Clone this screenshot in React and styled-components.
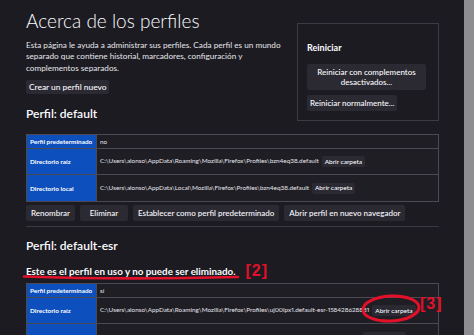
import styled, { createGlobalStyle } from "styled-components";

const GlobalStyle = createGlobalStyle`
  html, body {
    margin: 0;
    padding: 0;
    background: #1c1b22;
  }
  body {
    font-family: Lato, "Open Sans", sans-serif;
    color: #fbfbfe;
  }
  * { box-sizing: border-box; }
`;

const Screen = styled.div`
  display: flex;
  width: 474px;
  height: 335px;
  overflow: hidden;
  position: relative;
`;

const Main = styled.main`
  flex: 1;
  padding-left: 26px;
`;

const Scrollbar = styled.div`
  width: 10px;
  flex-shrink: 0;
  background: #8e8d92;
`;

const Column = styled.div`
  width: 413px;
`;

const Top = styled.div`
  display: flex;
  justify-content: space-between;
  align-items: flex-start;
`;

const Intro = styled.div`
  width: 262px;
`;

const Title = styled.h1`
  margin: 6px 0 0;
  font-size: 19px;
  font-weight: 300;
  line-height: 30px;
`;

const Para = styled.p`
  margin: 4px 0 0;
  font-size: 8.2px;
  line-height: 11.3px;
  color: #e6e6ea;
`;

const Button = styled.button`
  display: inline-block;
  width: ${p => (p.$w ? `${p.$w}px` : "auto")};
  min-width: ${p => p.$min || 0}px;
  height: ${p => p.$h || 16}px;
  margin-top: ${p => p.$mt || 0}px;
  padding: 0 ${p => p.$px || 5}px;
  border: none;
  border-radius: 2px;
  background: #2b2a33;
  color: #fbfbfe;
  font-family: inherit;
  font-size: ${p => p.$fs || 8}px;
  font-weight: 500;
  line-height: 1.3;
  text-align: center;
  white-space: nowrap;
`;

const RestartBox = styled.section`
  width: 142px;
  height: 98px;
  margin-top: 23px;
  padding: 18px 9px 0;
  border: 1px solid #3c3b44;
`;

const BoxTitle = styled.h3`
  margin: 0 0 10px;
  font-size: 9px;
  font-weight: 700;
  line-height: 12px;
`;

const BoxButtons = styled.div`
  display: flex;
  flex-direction: column;
  align-items: flex-start;
  gap: 5px;
`;

const ProfileTitle = styled.h2`
  margin: ${p => p.$mt || 0}px 0 0;
  font-size: 12px;
  font-weight: 600;
  line-height: 18px;
`;

const Table = styled.table`
  width: 413px;
  margin-top: ${p => p.$mt || 0}px;
  border-collapse: collapse;
  border: 1px solid #4b4a53;
  font-size: 6.35px;
`;

const Row = styled.tr`
  height: ${p => p.$h}px;
`;

const Th = styled.th`
  width: 70px;
  padding: 0 3px;
  background: #0c4fbd;
  border: 1px solid #4b4a53;
  color: #ffffff;
  font-size: 6.4px;
  font-weight: 700;
  text-align: left;
  white-space: nowrap;
`;

const Td = styled.td`
  padding: 0 3px;
  background: #1f1e25;
  border: 1px solid #4b4a53;
  color: #e6e6ea;
  white-space: nowrap;
  font-variant-numeric: proportional-nums;
`;

const CellButton = styled(Button)`
  height: 11px;
  margin-left: 3px;
  padding: 0 3px;
  font-size: 6.5px;
  vertical-align: middle;
`;

const Actions = styled.div`
  display: flex;
  gap: 5px;
  margin-top: 3px;
  padding-bottom: 5px;
  border-bottom: 1px solid #3a3942;
`;

const Notice = styled.div`
  display: flex;
  align-items: center;
  gap: 10px;
  height: 16px;
  margin-top: 8px;
`;

const NoticeText = styled.p`
  margin: 0;
  font-size: 9.8px;
  font-weight: 700;
  line-height: 12px;
`;

const Marker = styled.span`
  color: #e3102a;
  font-family: "Liberation Sans", "DejaVu Sans", sans-serif;
  font-size: 16px;
  font-weight: 700;
  line-height: 16px;
  letter-spacing: 1px;
`;

const FloatMarker = styled(Marker)`
  position: absolute;
  left: 420px;
  top: 296px;
`;

const Overlay = styled.svg`
  position: absolute;
  left: 0;
  top: 0;
  pointer-events: none;
`;

function ProfileTable({ isDefault, root, local, mt }) {
  return (
    <Table $mt={mt}>
      <tbody>
        <Row $h={14}>
          <Th>Perfil predeterminado</Th>
          <Td>{isDefault}</Td>
        </Row>
        <Row $h={26}>
          <Th>Directorio raíz</Th>
          <Td>
            {root}
            <CellButton>Abrir carpeta</CellButton>
          </Td>
        </Row>
        <Row $h={27}>
          <Th>Directorio local</Th>
          <Td>
            {local}
            <CellButton>Abrir carpeta</CellButton>
          </Td>
        </Row>
      </tbody>
    </Table>
  );
}

export default function App() {
  return (
    <Screen>
      <GlobalStyle />
      <Main>
        <Column>
          <Top>
            <Intro>
              <Title>Acerca de los perfiles</Title>
              <Para>
                Esta página le ayuda a administrar sus perfiles. Cada perfil es un mundo
                <br />
                separado que contiene historial, marcadores, configuración y
                <br />
                complementos separados.
              </Para>
              <Button $h={14} $px={3} $mt={3} $fs={8.4}>Crear un perfil nuevo</Button>
              <ProfileTitle $mt={11}>Perfil: default</ProfileTitle>
            </Intro>
            <RestartBox>
              <BoxTitle>Reiniciar</BoxTitle>
              <BoxButtons>
                <Button $h={26} $w={119}>
                  Reiniciar con complementos
                  <br />
                  desactivados...
                </Button>
                <Button $px={3}>Reiniciar normalmente...</Button>
              </BoxButtons>
            </RestartBox>
          </Top>
          <ProfileTable
            mt={11}
            isDefault="no"
            root="C:\Users\alonso\AppData\Roaming\Mozilla\Firefox\Profiles\bzn4eq38.default"
            local="C:\Users\alonso\AppData\Local\Mozilla\Firefox\Profiles\bzn4eq38.default"
          />
          <Actions>
            <Button $min={48}>Renombrar</Button>
            <Button $min={48}>Eliminar</Button>
            <Button $min={48}>Establecer como perfil predeterminado</Button>
            <Button $min={48}>Abrir perfil en nuevo navegador</Button>
          </Actions>
          <ProfileTitle $mt={10}>Perfil: default-esr</ProfileTitle>
          <Notice>
            <NoticeText>Este es el perfil en uso y no puede ser eliminado.</NoticeText>
            <Marker>[2]</Marker>
          </Notice>
          <ProfileTable
            mt={4}
            isDefault="sí"
            root="C:\Users\alonso\AppData\Roaming\Mozilla\Firefox\Profiles\uj00lpx1.default-esr-158428628881"
            local="C:\Users\alonso\AppData\Local\Mozilla\Firefox\Profiles\uj00lpx1.default-esr-158428628881"
          />
        </Column>
      </Main>
      <FloatMarker>[3]</FloatMarker>
      <Overlay width="474" height="335" viewBox="0 0 474 335">
        <path
          d="M24 276.5 C 80 278.5, 160 279, 238 277"
          fill="none"
          stroke="#e3102a"
          strokeWidth="2.6"
          strokeLinecap="round"
        />
        <ellipse
          cx="391"
          cy="308.5"
          rx="28"
          ry="12.5"
          fill="none"
          stroke="#e3102a"
          strokeWidth="3"
          transform="rotate(-3 391 308.5)"
        />
      </Overlay>
      <Scrollbar />
    </Screen>
  );
}
